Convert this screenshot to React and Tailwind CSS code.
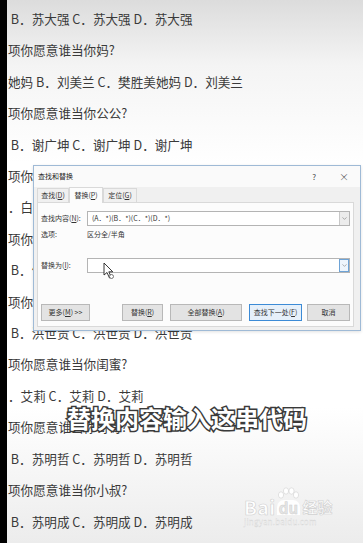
import { ChevronDown } from "lucide-react";

const lines = [
  " B．苏大强 C．苏大强 D．苏大强",
  "项你愿意谁当你妈?",
  "她妈 B．刘美兰 C．樊胜美她妈 D．刘美兰",
  "项你愿意谁当你公公?",
  " B．谢广坤 C．谢广坤 D．谢广坤",
  "项你愿意谁当你婆婆?",
  "．白展堂 C．白展堂 D．白展堂",
  "项你愿意谁当你老公?",
  " B．何以琛 C．何以琛 D．何以琛",
  "项你愿意谁当你公公?",
  " B．洪世贵 C．洪世贵 D．洪世贵",
  "项你愿意谁当你闺蜜?",
  "．艾莉 C．艾莉 D．艾莉",
  "项你愿意谁当你哥哥?",
  " B．苏明哲 C．苏明哲 D．苏明哲",
  "项你愿意谁当你小叔?",
  " B．苏明成 C．苏明成 D．苏明成",
];

const cjk = { fontFamily: '"Noto Sans CJK SC", "Noto Sans", sans-serif' };

const Btn = ({ children, className = "" }) => (
  <div
    className={`flex h-[17px] items-center justify-center border text-[7px] leading-none text-[#333] ${className}`}
  >
    {children}
  </div>
);

const ComboBox = ({ value, focused }) => (
  <div className="flex h-[15px] flex-1 items-stretch border border-[#b4b4b4] bg-white">
    <div className="flex flex-1 items-center pl-[4px] text-[7px] text-[#333]">{value}</div>
    <div
      className={`flex w-[10px] items-center justify-center border-l ${
        focused ? "border border-[#6ea3d6] bg-[#eef5fc]" : "border-[#c8c8c8] bg-[#ececec]"
      }`}
    >
      <ChevronDown size={7} strokeWidth={1.5} className="text-[#555]" />
    </div>
  </div>
);

const Cursor = () => (
  <svg width="12" height="18" viewBox="0 0 12 18" className="absolute left-[103px] top-[262px]">
    <path d="M1 1 L1 13 L4 10.5 L6.5 16 L8.3 15.2 L5.8 9.8 L9.8 9.8 Z" fill="#fff" stroke="#222" strokeWidth="0.9" strokeLinejoin="round" />
    <circle cx="8.5" cy="14.5" r="2" fill="#fff" stroke="#444" strokeWidth="0.7" />
  </svg>
);

const Dialog = () => (
  <div
    className="absolute left-[33px] top-[165px] flex h-[166px] w-[328px] flex-col border border-[#9fbad6] bg-[#f0f0f0] shadow-[0_1px_3px_rgba(0,0,0,0.12)]"
    style={cjk}
  >
    <div className="flex h-[21px] items-center bg-[#fafafa] pl-[4px] text-[7px] text-[#222]">
      <span>查找和替换</span>
      <span className="ml-auto mr-[23px] text-[8px] text-[#444]">?</span>
      <span className="mr-[11px] text-[10px] font-light leading-none text-[#444]">×</span>
    </div>
    <div className="flex h-[15px] items-end pl-[3px] text-[7px] text-[#333]">
      <div className="flex h-[14px] w-[32px] items-center justify-center border border-b-0 border-[#d9d9d9] bg-[#f0f0f0]">
        查找(<span className="underline">D</span>)
      </div>
      <div className="relative top-[1px] flex h-[16px] w-[34px] items-center justify-center border border-b-0 border-[#d9d9d9] bg-[#fcfcfc]">
        替换(<span className="underline">P</span>)
      </div>
      <div className="flex h-[14px] w-[34px] items-center justify-center border border-b-0 border-[#d9d9d9] bg-[#f0f0f0]">
        定位(<span className="underline">G</span>)
      </div>
    </div>
    <div className="ml-[3px] mr-[6px] flex h-[125px] flex-col border border-[#d9d9d9] bg-[#fcfcfc] px-[3px] text-[7px] text-[#333]">
      <div className="mt-[8px] flex items-center">
        <span className="w-[46px]">
          查找内容(<span className="underline">N</span>):
        </span>
        <ComboBox value="(A．*)(B．*)(C．*)(D．*)" />
      </div>
      <div className="mt-[3px] flex h-[10px] items-center">
        <span className="w-[46px]">选项:</span>
        <span>区分全/半角</span>
      </div>
      <div className="mt-[19px] flex items-center">
        <span className="w-[46px]">
          替换为(<span className="underline">I</span>):
        </span>
        <ComboBox value="" focused />
      </div>
      <div className="mt-[31px] flex items-center">
        <Btn className="w-[49px] border-[#b8b8b8] bg-[#e3e3e3]">
          更多(<span className="underline">M</span>)&nbsp;&gt;&gt;
        </Btn>
        <Btn className="ml-[32px] w-[41px] border-[#b8b8b8] bg-[#e3e3e3]">
          替换(<span className="underline">R</span>)
        </Btn>
        <Btn className="ml-[7px] w-[72px] border-[#b8b8b8] bg-[#e3e3e3]">
          全部替换(<span className="underline">A</span>)
        </Btn>
        <Btn className="ml-[7px] w-[53px] border-[#3c8bd6] bg-[#e6f0fa]">
          查找下一处(<span className="underline">F</span>)
        </Btn>
        <Btn className="ml-[5px] w-[43px] border-[#b8b8b8] bg-[#e3e3e3]">取消</Btn>
      </div>
    </div>
  </div>
);

const Watermark = () => (
  <div className="absolute left-[244px] top-[487px] flex flex-col items-start text-white" style={cjk}>
    <div className="flex items-end">
      <span className="text-[19px] font-bold leading-[17px] tracking-[0.5px] [-webkit-text-stroke:0.6px_#cfcfcf]">Bai</span>
      <div className="relative flex flex-col items-center">
        <svg width="26" height="14" viewBox="0 0 26 14" className="mb-[-1px]">
          <g fill="#fff" stroke="#d0d0d0" strokeWidth="0.6">
            <ellipse cx="6" cy="8" rx="2.6" ry="3.2" />
            <ellipse cx="11" cy="4" rx="2.6" ry="3.2" />
            <ellipse cx="16.5" cy="4" rx="2.6" ry="3.2" />
            <ellipse cx="21" cy="8" rx="2.6" ry="3.2" />
          </g>
        </svg>
        <span className="rounded-t-[7px] bg-white/90 px-[2px] text-[15px] font-bold leading-[15px] text-[#e6e6e6] [-webkit-text-stroke:0.5px_#cfcfcf]">
          du
        </span>
      </div>
      <span className="ml-[1px] text-[15px] font-bold leading-[17px] [-webkit-text-stroke:0.6px_#cfcfcf]">经验</span>
    </div>
    <span className="mt-[3px] text-[8px] leading-[8px] tracking-[0.2px] text-white [-webkit-text-stroke:0.3px_#d0d0d0]">
      jingyan.baidu.com
    </span>
  </div>
);

export default function App() {
  return (
    <div
      className="relative flex h-[543px] w-[363px] overflow-hidden bg-[linear-gradient(180deg,#dcdcdc_0%,#f4f4f4_12%,#ffffff_30%,#ffffff_75%,#ececec_100%)]"
      style={cjk}
    >
      <div className="w-[7px] shrink-0 bg-black" />
      <div className="flex flex-1 flex-col overflow-hidden pt-[3px] pl-[1px] text-[12.6px] leading-[31.4px] text-[#3a3a3a]">
        {lines.map((line, i) => (
          <div key={i} className="whitespace-pre">
            {line}
          </div>
        ))}
      </div>

      <Dialog />
      <Cursor />

      <div
        className="absolute left-[67px] top-[404px] whitespace-nowrap text-[24px] font-bold leading-[28px] text-white [-webkit-text-stroke:3px_#3a3a3a] [paint-order:stroke_fill]"
        style={cjk}
      >
        替换内容输入这串代码
      </div>

      <Watermark />
    </div>
  );
}
